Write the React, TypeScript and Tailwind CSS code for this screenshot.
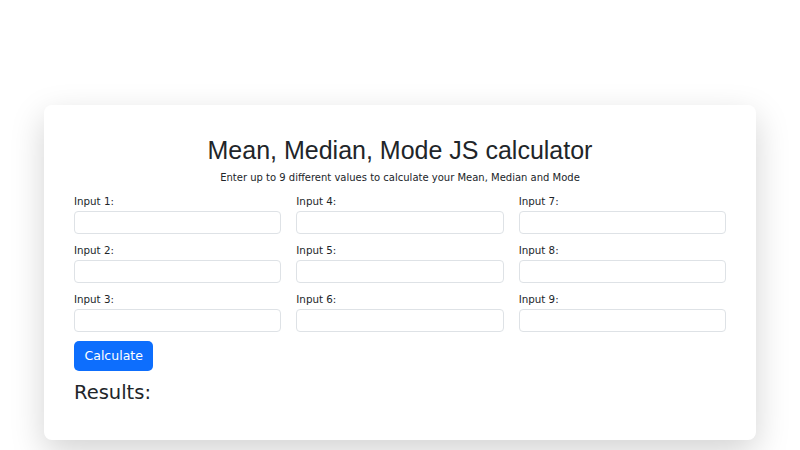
const inputs = [1, 4, 7, 2, 5, 8, 3, 6, 9];

const App = () => {
  return (
    <div className="min-h-screen bg-white pt-[105px] font-['DejaVu_Sans',sans-serif] text-[#212529]">
      <div className="mx-auto w-[712px] rounded-lg bg-white px-[30px] pt-[30px] pb-[35px] shadow-[0_12px_34px_rgba(0,0,0,0.175)]">
        <h1 className="text-center font-['Liberation_Sans',Arial,sans-serif] text-[25px] leading-[30px]">
          Mean, Median, Mode JS calculator
        </h1>
        <p className="mt-[5px] text-center text-[10px] leading-[15px]">
          Enter up to 9 different values to calculate your Mean, Median and Mode
        </p>
        <div className="mt-[9px] grid grid-cols-3 gap-x-[15px]">
          {inputs.map((n) => (
            <div key={n} className="mb-[9px] flex flex-col">
              <label htmlFor={`input-${n}`} className="text-[10.3px] leading-[15px]">
                Input {n}:
              </label>
              <input
                id={`input-${n}`}
                type="text"
                className="mt-[2px] h-[23px] rounded-[4px] border border-[#dee2e6] bg-white px-2 text-[11px] outline-none"
              />
            </div>
          ))}
        </div>
        <button className="h-[30px] rounded-[5px] bg-[#0d6efd] px-[10.5px] text-[12.5px] leading-[30px] text-white">
          Calculate
        </button>
        <h2 className="mt-[10px] text-[19.5px] leading-[24px]">Results:</h2>
      </div>
    </div>
  );
};

export default App;
